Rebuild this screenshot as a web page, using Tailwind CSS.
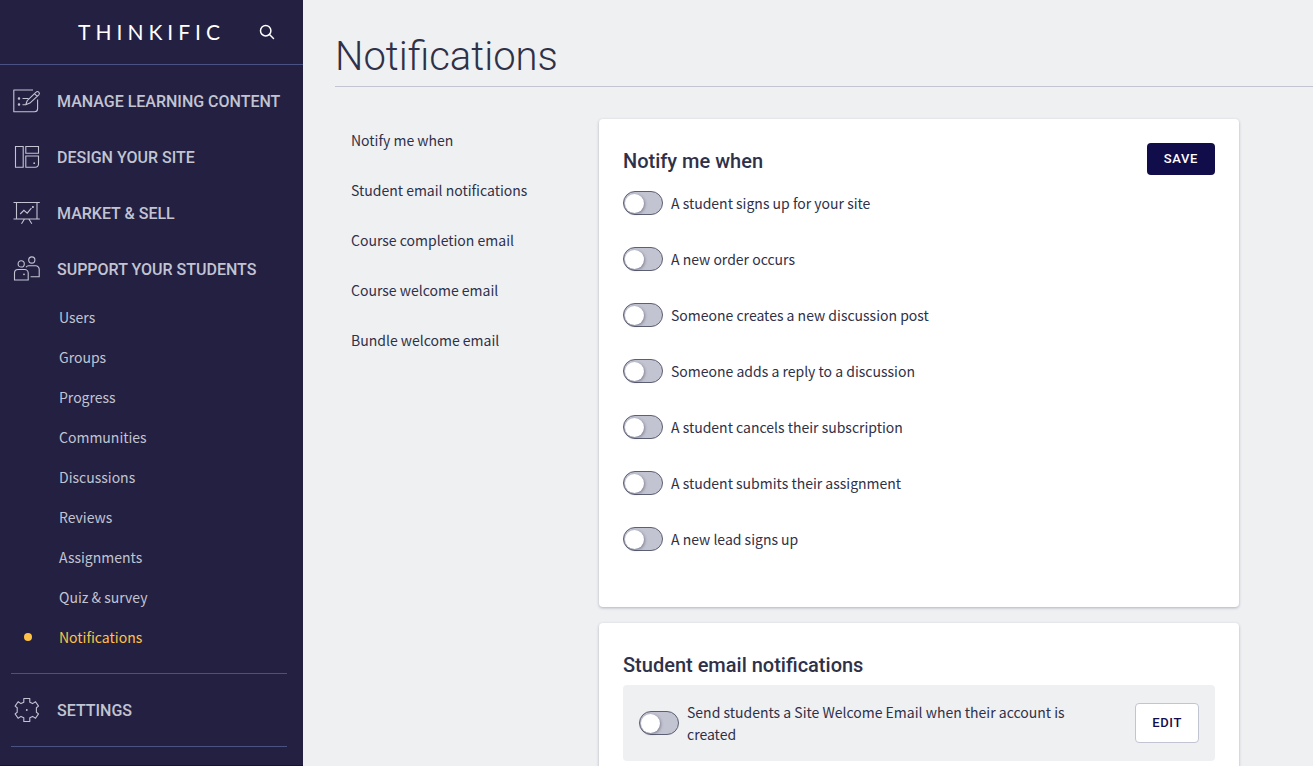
<!DOCTYPE html>
<html lang="en">
<head>
<meta charset="utf-8">
<meta name="viewport" content="width=device-width, initial-scale=1">
<title>Notifications</title>
<script src="https://cdn.jsdelivr.net/npm/@tailwindcss/browser@4"></script>
</head>
<body class="flex h-screen overflow-hidden bg-[#eff0f2] font-['Noto_Sans_CJK_SC','Noto_Sans',sans-serif] text-[14px] leading-[22px] text-[#2f3148]">

<aside class="flex w-[303px] shrink-0 flex-col overflow-hidden bg-[#232042] text-[#c2c4d1]">
  <header class="flex h-[65px] shrink-0 items-center justify-end gap-[34px] border-b border-[#4a5283] pr-7">
    <a href="#" class="font-[Lato,sans-serif] text-[21px] leading-6 tracking-[5px] text-white">THINKIFIC</a>
    <button type="button" aria-label="Search" class="text-white">
      <svg class="size-4" viewBox="0 0 16 16" fill="none" stroke="currentColor" stroke-width="1.5" stroke-linecap="round"><circle cx="6.7" cy="6.7" r="5.2"/><path d="M10.5 10.5 14.5 14.5"/></svg>
    </button>
  </header>

  <nav aria-label="Main" class="shrink-0 pt-2">
    <ul class="font-[Roboto,sans-serif] text-[16px] leading-6 font-medium">
      <li><a href="#" class="flex h-14 items-center gap-4 pl-[13px]">
        <svg class="size-7 shrink-0" viewBox="0 0 28 28" fill="none" stroke="currentColor" stroke-width="1.1" stroke-linejoin="round"><path d="M20 3H.8v21.8h20.8a3 3 0 0 0 3-3V12.5"/><path d="m14.2 13.7 8.9-8.5a1.8 1.8 0 0 1 2.7 2.6l-8.9 8.3-4.2 1.6z M21.5 6.7l2.7 2.7"/><path d="M9.5 11.5h6M9.5 17.7h3"/><circle cx="6" cy="11.5" r=".7" fill="currentColor"/><circle cx="6" cy="17.5" r=".7" fill="currentColor"/></svg>
        <span class="pt-0.5">MANAGE LEARNING CONTENT</span></a></li>
      <li><a href="#" class="flex h-14 items-center gap-4 pl-[13px]">
        <svg class="size-7 shrink-0" viewBox="0 0 28 28" fill="none" stroke="currentColor" stroke-width="1.1"><path d="M2.5 3.5h7.7v20.8H2.5zM12.8 3.5h12.7v6.7H12.8zM12.8 13h12.7v8.3a3 3 0 0 1-3 3h-9.7z"/><circle cx="21.2" cy="20.2" r=".9" fill="currentColor" stroke="none"/></svg>
        <span class="pt-0.5">DESIGN YOUR SITE</span></a></li>
      <li><a href="#" class="flex h-14 items-center gap-4 pl-[13px]">
        <svg class="size-7 shrink-0" viewBox="0 0 28 28" fill="none" stroke="currentColor" stroke-width="1.1"><path d="M.5 3.5h26.3M.5 20h26.3M3.5 3.5V20M24 3.5V20M11.5 20l-3 4.8M15.8 20l3 4.8"/><path d="m7.2 15 3.7-3.7 3.3 2.9 4.2-5"/><circle cx="19.9" cy="8" r="1.1" fill="currentColor" stroke="none"/></svg>
        <span class="pt-0.5">MARKET &amp; SELL</span></a></li>
      <li><a href="#" class="flex h-14 items-center gap-4 pl-[13px]">
        <svg class="size-7 shrink-0" viewBox="0 0 28 28" fill="none" stroke="currentColor" stroke-width="1.1"><circle cx="8.2" cy="8.9" r="3.1"/><circle cx="18.8" cy="5" r="3.1"/><path d="M1.5 25v-7a3.5 3.5 0 0 1 3.5-3.5h6.7a3.5 3.5 0 0 1 3.5 3.5v7zM13 12.3a3.2 3.2 0 0 1 2.7-1.5h7a3.5 3.5 0 0 1 3.5 3.5v7.5h-8.6"/><circle cx="11" cy="19.3" r=".9" fill="currentColor" stroke="none"/></svg>
        <span class="pt-0.5">SUPPORT YOUR STUDENTS</span></a></li>
    </ul>
    <ul>
      <li><a href="#" class="flex h-10 items-center pl-[59px]">Users</a></li>
      <li><a href="#" class="flex h-10 items-center pl-[59px]">Groups</a></li>
      <li><a href="#" class="flex h-10 items-center pl-[59px]">Progress</a></li>
      <li><a href="#" class="flex h-10 items-center pl-[59px]">Communities</a></li>
      <li><a href="#" class="flex h-10 items-center pl-[59px]">Discussions</a></li>
      <li><a href="#" class="flex h-10 items-center pl-[59px]">Reviews</a></li>
      <li><a href="#" class="flex h-10 items-center pl-[59px]">Assignments</a></li>
      <li><a href="#" class="flex h-10 items-center pl-[59px]">Quiz &amp; survey</a></li>
      <li><a href="#" aria-current="page" class="flex h-10 items-center gap-[27px] pl-6 text-[#ffc247]"><span class="size-2 rounded-full bg-[#ffc247]"></span>Notifications</a></li>
    </ul>
    <div class="mt-4 mr-4 ml-[11px] border-y border-[#4a5283]">
      <a href="#" class="flex h-[72px] items-center gap-4 pl-[2px] font-[Roboto,sans-serif] text-[16px] leading-6 font-medium">
        <svg class="size-7 shrink-0" viewBox="0 0 28 28" fill="none" stroke="currentColor" stroke-width="1.1" stroke-linejoin="round"><path d="M10.8 2.5h6v3.7l2.8 1.4 2.9-1.9 3 4.4-2.1 1.6v4.6l2.1 1.6-3 4.4-2.9-1.9-2.8 1.4v3.7h-6v-3.7L8 20.4l-2.9 1.9-3-4.4 2.1-1.6v-4.6l-2.1-1.6 3-4.4L8 7.6l2.8-1.4z"/><circle cx="13.8" cy="14" r=".9" fill="currentColor" stroke="none"/></svg>
        <span class="pt-0.5">SETTINGS</span></a>
    </div>
  </nav>
  <footer class="mt-[18px] h-12 shrink-0 bg-[#17152e]"></footer>
</aside>

<main class="min-w-0 flex-1 overflow-hidden pl-8">
  <h1 class="h-[87px] border-b border-[#c2c4d1] pt-8 font-[Roboto,sans-serif] text-[40px] leading-[50px] font-light">Notifications</h1>
  <div class="flex pt-8 pr-8">
    <nav aria-label="On this page" class="w-[264px] shrink-0 px-4 pt-2.5">
      <ul class="flex flex-col gap-7">
        <li><a href="#notify">Notify me when</a></li>
        <li><a href="#student">Student email notifications</a></li>
        <li><a href="#completion">Course completion email</a></li>
        <li><a href="#welcome">Course welcome email</a></li>
        <li><a href="#bundle">Bundle welcome email</a></li>
      </ul>
    </nav>
    <div class="flex max-w-[640px] flex-1 flex-col gap-4">
      <section id="notify" class="rounded bg-white px-6 pt-6 pb-14 shadow-[0_1px_3px_rgba(35,32,66,0.3)]">
        <div class="mb-3 flex items-start justify-between">
          <h2 class="font-[Roboto,sans-serif] text-[20px] leading-9 font-medium">Notify me when</h2>
          <button type="button" class="h-8 rounded bg-[#110d4a] px-[17px] font-[Roboto,sans-serif] text-[13px] font-medium tracking-wider text-white">SAVE</button>
        </div>
        <div class="flex flex-col gap-8">
          <label class="flex h-6 items-center gap-2"><input type="checkbox" role="switch" class="flex h-6 w-10 shrink-0 appearance-none items-center rounded-full border border-[#5d5f73] bg-[#c2c4d1] pl-px before:size-[19px] before:rounded-full before:bg-white before:shadow-[1px_1px_3px_rgba(35,32,66,0.4)]">A student signs up for your site</label>
          <label class="flex h-6 items-center gap-2"><input type="checkbox" role="switch" class="flex h-6 w-10 shrink-0 appearance-none items-center rounded-full border border-[#5d5f73] bg-[#c2c4d1] pl-px before:size-[19px] before:rounded-full before:bg-white before:shadow-[1px_1px_3px_rgba(35,32,66,0.4)]">A new order occurs</label>
          <label class="flex h-6 items-center gap-2"><input type="checkbox" role="switch" class="flex h-6 w-10 shrink-0 appearance-none items-center rounded-full border border-[#5d5f73] bg-[#c2c4d1] pl-px before:size-[19px] before:rounded-full before:bg-white before:shadow-[1px_1px_3px_rgba(35,32,66,0.4)]">Someone creates a new discussion post</label>
          <label class="flex h-6 items-center gap-2"><input type="checkbox" role="switch" class="flex h-6 w-10 shrink-0 appearance-none items-center rounded-full border border-[#5d5f73] bg-[#c2c4d1] pl-px before:size-[19px] before:rounded-full before:bg-white before:shadow-[1px_1px_3px_rgba(35,32,66,0.4)]">Someone adds a reply to a discussion</label>
          <label class="flex h-6 items-center gap-2"><input type="checkbox" role="switch" class="flex h-6 w-10 shrink-0 appearance-none items-center rounded-full border border-[#5d5f73] bg-[#c2c4d1] pl-px before:size-[19px] before:rounded-full before:bg-white before:shadow-[1px_1px_3px_rgba(35,32,66,0.4)]">A student cancels their subscription</label>
          <label class="flex h-6 items-center gap-2"><input type="checkbox" role="switch" class="flex h-6 w-10 shrink-0 appearance-none items-center rounded-full border border-[#5d5f73] bg-[#c2c4d1] pl-px before:size-[19px] before:rounded-full before:bg-white before:shadow-[1px_1px_3px_rgba(35,32,66,0.4)]">A student submits their assignment</label>
          <label class="flex h-6 items-center gap-2"><input type="checkbox" role="switch" class="flex h-6 w-10 shrink-0 appearance-none items-center rounded-full border border-[#5d5f73] bg-[#c2c4d1] pl-px before:size-[19px] before:rounded-full before:bg-white before:shadow-[1px_1px_3px_rgba(35,32,66,0.4)]">A new lead signs up</label>
        </div>
      </section>
      <section id="student" class="rounded bg-white p-6 shadow-[0_1px_3px_rgba(35,32,66,0.3)]">
        <h2 class="mb-0.5 font-[Roboto,sans-serif] text-[20px] leading-9 font-medium">Student email notifications</h2>
        <div class="flex items-center justify-between gap-6 rounded bg-[#eff0f2] p-4">
          <label class="flex max-w-[460px] items-center gap-2"><input type="checkbox" role="switch" class="flex h-6 w-10 shrink-0 appearance-none items-center rounded-full border border-[#5d5f73] bg-[#c2c4d1] pl-px before:size-[19px] before:rounded-full before:bg-white before:shadow-[1px_1px_3px_rgba(35,32,66,0.4)]">Send students a Site Welcome Email when their account is created</label>
          <button type="button" class="h-10 shrink-0 rounded border border-[#c2c4d1] bg-white px-4 font-[Roboto,sans-serif] text-[13px] font-medium tracking-wider text-[#110d4a]">EDIT</button>
        </div>
      </section>
    </div>
  </div>
</main>
</body>
</html>
